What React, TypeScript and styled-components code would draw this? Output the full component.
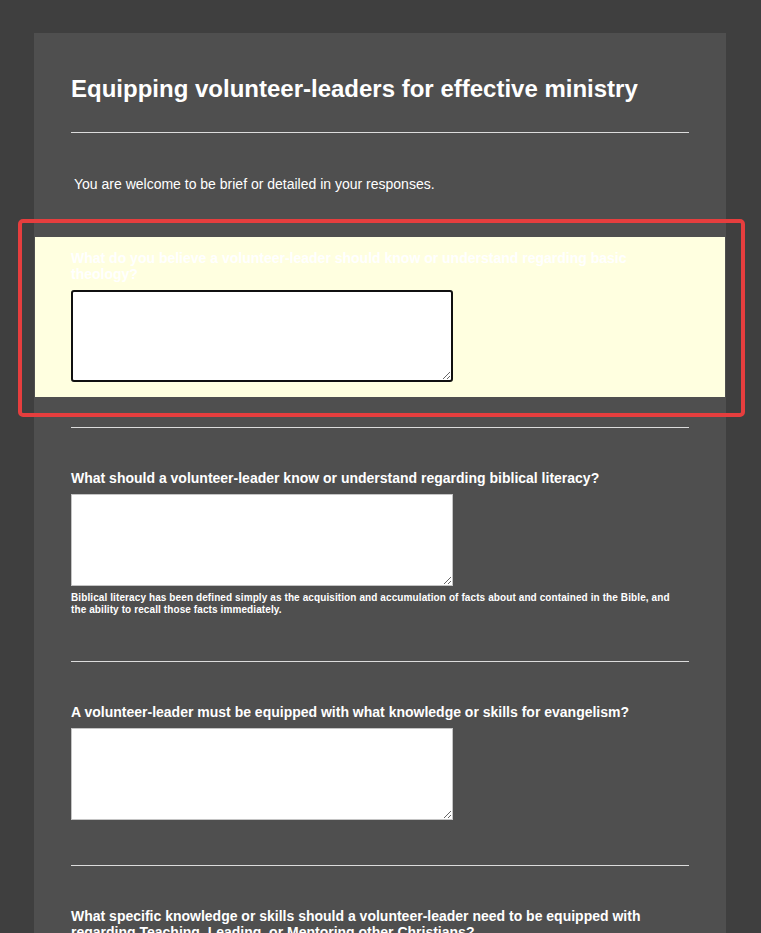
import styled, { createGlobalStyle } from 'styled-components'

const GlobalStyle = createGlobalStyle`
  html, body {
    margin: 0;
    padding: 0;
    background: #3f3f3f;
  }
  body {
    font-family: "Liberation Sans", Arial, sans-serif;
    color: #ffffff;
  }
`

const Page = styled.div`
  position: relative;
  min-height: 933px;
  padding: 33px 35px 0 34px;
  box-sizing: border-box;
`

const Card = styled.form`
  width: 692px;
  padding: 0 1px 40px;
  box-sizing: border-box;
  background: #4f4f4f;
`

const Header = styled.div`
  padding: 42px 36px 0;
`

const Title = styled.h1`
  margin: 0;
  font-size: 24px;
  line-height: 28px;
  font-weight: bold;
  color: #ffffff;
`

const Rule = styled.hr<{ $top?: number; $bottom?: number }>`
  margin: ${(p) => p.$top ?? 30}px 36px ${(p) => p.$bottom ?? 29}px;
  border: 0;
  height: 1px;
  background: #dcdcdc;
`

const Intro = styled.p`
  margin: 0 36px 45px 39px;
  font-size: 14px;
  line-height: 16px;
`

const Question = styled.div<{ $highlight?: boolean }>`
  padding: 13px 36px 15px;
  background: ${(p) => (p.$highlight ? '#ffffe0' : 'transparent')};
`

const Label = styled.label`
  display: block;
  margin-bottom: 8px;
  font-size: 14px;
  line-height: 16px;
  font-weight: bold;
  color: #ffffff;
`

const Answer = styled.textarea<{ $active?: boolean }>`
  display: block;
  width: 382px;
  height: 92px;
  box-sizing: border-box;
  margin: 0;
  padding: 2px;
  font-family: "Liberation Sans", Arial, sans-serif;
  font-size: 13px;
  background: #ffffff;
  border: ${(p) => (p.$active ? '2px solid #101010' : '1px solid #c4c4c4')};
  border-radius: ${(p) => (p.$active ? '3px' : '0')};
  outline: none;
  &:focus {
    outline: none;
  }
`

const Hint = styled.div`
  max-width: 605px;
  margin-top: 6px;
  font-size: 10px;
  line-height: 12px;
  font-weight: bold;
  letter-spacing: 0.1px;
  color: #ffffff;
`

const Marker = styled.div`
  position: absolute;
  left: 18px;
  top: 219px;
  width: 727px;
  height: 198px;
  box-sizing: border-box;
  border: 4px solid #e63e3e;
  border-radius: 5px;
  pointer-events: none;
`

type Item = {
  id: string
  text: string
  hint?: string
}

const questions: Item[] = [
  {
    id: 'theology',
    text: 'What do you believe a volunteer-leader should know or understand regarding basic theology?',
  },
  {
    id: 'literacy',
    text: 'What should a volunteer-leader know or understand regarding biblical literacy?',
    hint: 'Biblical literacy has been defined simply as the acquisition and accumulation of facts about and contained in the Bible, and the ability to recall those facts immediately.',
  },
  {
    id: 'evangelism',
    text: 'A volunteer-leader must be equipped with what knowledge or skills for evangelism?',
  },
  {
    id: 'teaching',
    text: 'What specific knowledge or skills should a volunteer-leader need to be equipped with regarding Teaching, Leading, or Mentoring other Christians?',
  },
]

function App() {
  return (
    <>
      <GlobalStyle />
      <Page>
        <Card onSubmit={(e) => e.preventDefault()}>
          <Header>
            <Title>Equipping volunteer-leaders for effective ministry</Title>
          </Header>
          <Rule $top={29} $bottom={43} />
          <Intro>You are welcome to be brief or detailed in your responses.</Intro>

          {questions.map((q, i) => (
            <div key={q.id}>
              {i > 0 && <Rule />}
              <Question $highlight={i === 0}>
                <Label htmlFor={q.id}>{q.text}</Label>
                <Answer id={q.id} name={q.id} $active={i === 0} autoFocus={i === 0} />
                {q.hint && <Hint>{q.hint}</Hint>}
              </Question>
            </div>
          ))}
        </Card>
        <Marker />
      </Page>
    </>
  )
}

export default App
